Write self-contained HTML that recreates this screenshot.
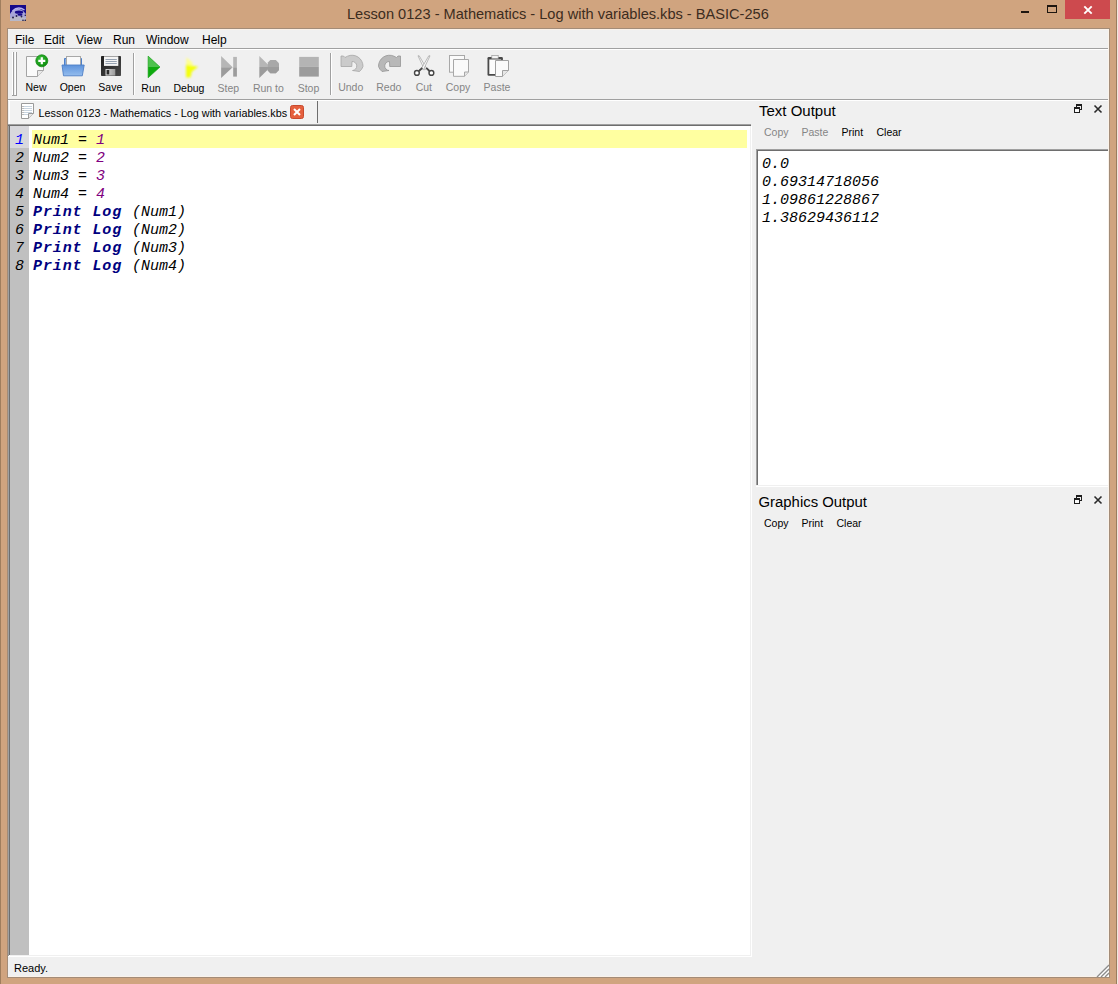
<!DOCTYPE html>
<html><head><meta charset="utf-8">
<style>
*{margin:0;padding:0;box-sizing:border-box}
html,body{width:1118px;height:984px;overflow:hidden;background:#D0A47F;font-family:"Liberation Sans",sans-serif;color:#000}
.a{position:absolute;white-space:pre}
.c{position:absolute;white-space:pre;text-align:center;width:60px}
.title{left:347px;top:6px;font-size:14.6px;line-height:16px;color:#3C2C20}
.menu{top:33px;font-size:12px;line-height:14px;color:#000}
.tl{font-size:10.5px;line-height:12px;top:81px;color:#000}
.dis{color:#858585}
.code{font-family:"Liberation Mono",monospace;font-size:15px;font-style:italic;line-height:18px}
.kw{font-weight:bold;color:#000080;letter-spacing:0.9px}
.num{color:#800080}
.ln{font-family:"Liberation Mono",monospace;font-size:15px;font-style:italic;line-height:18px;text-align:right;width:15px;left:9px}
.db{font-size:10.5px;line-height:12px}
</style></head><body>
<!-- window frame -->
<div class="a" style="left:0;top:0;width:1px;height:984px;background:#A07E5E"></div>
<div class="a" style="left:1116px;top:0;width:1px;height:984px;background:#9C7C5E"></div>
<div class="a" style="left:1117px;top:0;width:1px;height:984px;background:#F2E8DE"></div>
<!-- app icon -->
<svg class="a" style="left:10px;top:5px" width="16" height="16" viewBox="0 0 16 16">
<rect x="0" y="0" width="16" height="16" fill="#16098A"/>
<path d="M0 16V9Q2 5 6 4Q11 3 15 8L16 9V16Z" fill="#A7A5D8"/>
<path d="M2.5 6Q8 0.5 14.5 5" stroke="#B4B0EE" stroke-width="1.5" fill="none"/>
<ellipse cx="9" cy="7.2" rx="4.2" ry="1.6" fill="#16098A"/>
<ellipse cx="10" cy="9.8" rx="2.6" ry="1" fill="#16098A"/>
<path d="M0 16V13Q8 10 16 13V16Z" fill="#B8B8C8"/>
<g fill="#28244A"><circle cx="3" cy="12.5" r="1"/><circle cx="6.5" cy="11" r="0.9"/><circle cx="11.5" cy="11.5" r="0.9"/><circle cx="15.3" cy="10.2" r="0.8"/><circle cx="13" cy="15.3" r="0.8"/><circle cx="15.3" cy="15.3" r="0.8"/></g>
</svg>
<div class="a title">Lesson 0123 - Mathematics - Log with variables.kbs - BASIC-256</div>
<!-- min/max/close -->
<div class="a" style="left:1021px;top:11px;width:8px;height:2px;background:#1E1610"></div>
<div class="a" style="left:1047px;top:5px;width:10px;height:8px;border:1px solid #1E1610;border-top-width:2px"></div>
<div class="a" style="left:1065px;top:0;width:45px;height:19px;background:#CD4A4E"></div>
<svg class="a" style="left:1083px;top:5px" width="10" height="10" viewBox="0 0 10 10"><path d="M1.3 1.3L8.7 8.7M8.7 1.3L1.3 8.7" stroke="#fff" stroke-width="1.9"/></svg>
<!-- client -->
<div class="a" style="left:7px;top:28px;width:1103px;height:950px;background:#A38C78"></div>
<div class="a" style="left:8px;top:29px;width:1101px;height:948px;background:#F0F0F0"></div>
<div class="a" style="left:1108px;top:29px;width:1px;height:948px;background:#FBF3EA"></div>
<div class="a" style="left:8px;top:29px;width:1100px;height:1px;background:#FBF2EA"></div>
<div class="a" style="left:8px;top:976px;width:1100px;height:1px;background:#FBF2EA"></div>
<!-- menubar -->
<div class="a menu" style="left:15px">File</div>
<div class="a menu" style="left:44px">Edit</div>
<div class="a menu" style="left:76px">View</div>
<div class="a menu" style="left:113px">Run</div>
<div class="a menu" style="left:146px">Window</div>
<div class="a menu" style="left:202px">Help</div>
<div class="a" style="left:8px;top:48px;width:1100px;height:1px;background:#A0A0A0"></div>
<div class="a" style="left:8px;top:49px;width:1100px;height:1px;background:#FFFFFF"></div>
<!-- toolbar handle -->
<div class="a" style="left:12px;top:52px;width:1px;height:43px;background:#FFFFFF"></div>
<div class="a" style="left:13px;top:52px;width:1px;height:43px;background:#A0A0A0"></div>
<div class="a" style="left:15px;top:52px;width:1px;height:43px;background:#FFFFFF"></div>
<div class="a" style="left:16px;top:52px;width:1px;height:43px;background:#A0A0A0"></div>
<div class="a" style="left:12px;top:95px;width:5px;height:1px;background:#A0A0A0"></div>
<!-- toolbar separators -->
<div class="a" style="left:133px;top:53px;width:1px;height:42px;background:#A0A0A0"></div>
<div class="a" style="left:134px;top:53px;width:1px;height:42px;background:#FFFFFF"></div>
<div class="a" style="left:330px;top:53px;width:1px;height:42px;background:#A0A0A0"></div>
<div class="a" style="left:331px;top:53px;width:1px;height:42px;background:#FFFFFF"></div>
<!-- TOOLBAR ICONS -->
<svg class="a" style="left:0;top:0" width="520" height="100" viewBox="0 0 520 100">
<defs>
<linearGradient id="gOpen" x1="0" y1="0" x2="0" y2="1"><stop offset="0" stop-color="#5E93DC"/><stop offset="1" stop-color="#94BDEE"/></linearGradient>
<linearGradient id="gSave" x1="0" y1="0" x2="1" y2="1"><stop offset="0" stop-color="#1E1E1E"/><stop offset="1" stop-color="#4A4A4A"/></linearGradient>
<linearGradient id="gShut" x1="0" y1="0" x2="1" y2="0"><stop offset="0" stop-color="#D8D8D8"/><stop offset="1" stop-color="#9A9A9A"/></linearGradient>
<radialGradient id="gGreen" cx="0.4" cy="0.35" r="0.7"><stop offset="0" stop-color="#3CC03C"/><stop offset="1" stop-color="#0A8A0A"/></radialGradient>
<filter id="blur1" x="-50%" y="-50%" width="200%" height="200%"><feGaussianBlur stdDeviation="1.1"/></filter>
</defs>
<!-- New -->
<path d="M26.5 56.5H43.5V70.5L37.5 76.5H26.5Z" fill="#FAFAFA" stroke="#A4A4A4"/>
<path d="M43.5 70.5H37.5V76.5" fill="#E8E8E8" stroke="#A4A4A4"/>
<circle cx="41.8" cy="60.8" r="6" fill="url(#gGreen)" stroke="#138A13" stroke-width="0.8"/>
<path d="M41.8 57.3V64.3M38.3 60.8H45.3" stroke="#fff" stroke-width="2.2"/>
<!-- Open -->
<path d="M64.5 58.5H81.5V66H64.5Z" fill="#7FAAE4" stroke="#4F80C8"/>
<rect x="66.5" y="56.5" width="14" height="9" fill="#FAFAFA" stroke="#A8A8A8"/>
<path d="M62 65H84.2L82.3 75.8H63.5Z" fill="url(#gOpen)" stroke="#4F7FC6" stroke-width="0.9"/>
<!-- Save -->
<rect x="101" y="56" width="20" height="20" rx="0.8" fill="url(#gSave)"/>
<rect x="104" y="56.4" width="14.3" height="9.5" fill="#F4F4F4"/>
<path d="M105.5 59.5H116.8M105.5 61.5H116.8M105.5 63.5H116.8" stroke="#8C9AAA" stroke-width="0.9"/>
<rect x="105.5" y="69" width="9.8" height="6.6" fill="url(#gShut)"/>
<rect x="106.6" y="70" width="2.6" height="4.4" fill="#2A2A2A"/>
<!-- Run -->
<path d="M148.1 56.1L160 67L148.1 67Z" fill="#4DC24D"/>
<path d="M148.1 67L160 67L148.1 77.8Z" fill="#0EAA0E"/>
<path d="M148.1 56.1L160 67L148.1 77.8Z" fill="none" stroke="#11A011" stroke-width="0.6"/>
<!-- Debug -->
<g filter="url(#blur1)">
<path d="M186.3 57.2L192.5 62.5L192.5 66.5L186.3 66.5Z" fill="#FFFF90"/>
<path d="M186 64.5L198.2 66.8L192 71.5L190.5 77.5L186 77.5Z" fill="#F4FF10"/>
</g>
<!-- Step -->
<path d="M221.1 56.1L232.7 67.3H221.1Z" fill="#B6B6B6"/>
<path d="M221.1 67.3H232.7L221.1 78.1Z" fill="#9C9C9C"/>
<rect x="233.2" y="56.9" width="3.7" height="10.4" fill="#B6B6B6"/>
<rect x="233.2" y="67.3" width="3.7" height="9.3" fill="#9C9C9C"/>
<!-- Run to -->
<path d="M259.3 56.1L270.5 67H259.3Z" fill="#B6B6B6"/>
<path d="M259.3 67H270.5L259.3 78Z" fill="#9C9C9C"/>
<path d="M270.3 59.9H275.8L279 63.2V69.9L275.8 73.2H270.3L267.8 70.5V62.6Z" fill="#A8A8A8"/>
<path d="M267.8 67H279V69.9L275.8 73.2H270.3L267.8 70.5Z" fill="#9C9C9C"/>
<!-- Stop -->
<rect x="299.2" y="56.9" width="19.6" height="10" fill="#B4B4B4"/>
<rect x="299.2" y="66.9" width="19.6" height="9.7" fill="#9C9C9C"/>
<!-- Undo -->
<path d="M341 56L343.5 56L345 57.5L347.5 56.2A11 11 0 0 1 363 66.5A11 11 0 0 1 359.5 71.5L352.5 70.5A4.5 4.5 0 0 0 352 61.5L351.8 66.5L341 66.5Z" fill="#CBCBCB" stroke="#A6A6A6" stroke-width="0.8"/>
<!-- Redo -->
<g transform="translate(741.5 0) scale(-1 1)"><path d="M341 56L343.5 56L345 57.5L347.5 56.2A11 11 0 0 1 363 66.5A11 11 0 0 1 359.5 71.5L352.5 70.5A4.5 4.5 0 0 0 352 61.5L351.8 66.5L341 66.5Z" fill="#B8B8B8" stroke="#959595" stroke-width="0.8"/></g>
<!-- Cut -->
<path d="M418 55.8L419.2 55.8L426.6 68.6L424.6 69.8Z" fill="#FCFCFC" stroke="#8E8E8E" stroke-width="0.6"/>
<path d="M430 55.8L428.8 55.8L421.4 68.6L423.4 69.8Z" fill="#FCFCFC" stroke="#8E8E8E" stroke-width="0.6"/>
<path d="M419 71L422.3 67.8M429.5 71L426.2 67.8" stroke="#454545" stroke-width="1.8"/>
<circle cx="416.9" cy="72.9" r="2.4" fill="#FFFFFF" stroke="#454545" stroke-width="1.4"/>
<circle cx="431.4" cy="72.9" r="2.4" fill="#FFFFFF" stroke="#454545" stroke-width="1.4"/>
<!-- Copy -->
<rect x="449.5" y="55.5" width="15" height="16.7" fill="#FAFAFA" stroke="#A8A8A8"/>
<path d="M453.5 59.5H468.5V72L464.5 76.3H453.5Z" fill="#FAFAFA" stroke="#A8A8A8"/>
<path d="M468.5 72H464.5V76.3" fill="#E6E6E6" stroke="#A8A8A8"/>
<!-- Paste -->
<rect x="487.5" y="57" width="15.4" height="18.8" rx="1.2" fill="#4A4A4A"/>
<rect x="489.3" y="59.5" width="11.8" height="14.5" fill="#FCFCFC"/>
<rect x="491.8" y="55.5" width="6.4" height="3" fill="#F4F4F4" stroke="#9A9A9A" stroke-width="0.7"/>
<path d="M495.5 60.5H508.5V70.5L502.5 76.5H495.5Z" fill="#FAFAFA" stroke="#A0A0A0"/>
<path d="M508.5 70.5H502.5V76.5" fill="#E6E6E6" stroke="#A0A0A0"/>

</svg>
<!-- toolbar labels -->
<div class="c tl" style="left:6px">New</div>
<div class="c tl" style="left:42.5px">Open</div>
<div class="c tl" style="left:80.3px">Save</div>
<div class="c tl" style="left:121px;top:82px">Run</div>
<div class="c tl" style="left:159px;top:82px">Debug</div>
<div class="c tl dis" style="left:198.4px;top:82px">Step</div>
<div class="c tl dis" style="left:238.4px;top:82px">Run to</div>
<div class="c tl dis" style="left:278.5px;top:82px">Stop</div>
<div class="c tl dis" style="left:320.7px">Undo</div>
<div class="c tl dis" style="left:358.8px">Redo</div>
<div class="c tl dis" style="left:393.8px">Cut</div>
<div class="c tl dis" style="left:428px">Copy</div>
<div class="c tl dis" style="left:467px">Paste</div>
<div class="a" style="left:8px;top:99px;width:1100px;height:1px;background:#A0A0A0"></div>
<div class="a" style="left:8px;top:100px;width:1100px;height:1px;background:#FFFFFF"></div>
<!-- tab bar -->
<div class="a" style="left:9px;top:101px;width:308px;height:24px;background:#F2F2F2;border-left:1px solid #FFFFFF"></div>
<div class="a" style="left:317px;top:101px;width:1px;height:22px;background:#6E6E6E"></div>
<svg class="a" style="left:21px;top:103px" width="14" height="16" viewBox="0 0 14 16">
<path d="M0.5 0.5 H12.5 V10.5 L7.5 15.5 H0.5Z" fill="#fff" stroke="#9A9A9A"/>
<path d="M12.5 10.5 H7.5 V15.5" fill="#E8E8E8" stroke="#9A9A9A"/>
<g stroke="#C8D4E0"><path d="M3 3.5H11M3 5.5H11M3 7.5H11M3 9.5H11M3 11.5H7"/></g>
<g fill="#777"><rect x="1.5" y="3" width="1" height="1"/><rect x="1.5" y="5" width="1" height="1"/><rect x="1.5" y="7" width="1" height="1"/><rect x="1.5" y="9" width="1" height="1"/><rect x="1.5" y="11" width="1" height="1"/></g>
</svg>
<div class="a" style="left:38.6px;top:107px;font-size:10.8px;line-height:12px">Lesson 0123 - Mathematics - Log with variables.kbs</div>
<svg class="a" style="left:290px;top:105px" width="14" height="14" viewBox="0 0 14 14">
<rect x="0.5" y="0.5" width="13" height="13" rx="2" fill="#E5603E" stroke="#C84A2E"/>
<path d="M4 4L10 10M10 4L4 10" stroke="#fff" stroke-width="2"/>
</svg>
<div class="a" style="left:8px;top:124px;width:743px;height:1px;background:#A0A0A0"></div>
<div class="a" style="left:8px;top:125px;width:743px;height:1px;background:#6E6E6E"></div>
<!-- editor -->
<div class="a" style="left:8px;top:126px;width:744px;height:831px;background:#fff"></div>
<div class="a" style="left:8px;top:126px;width:1px;height:830px;background:#A0A0A0"></div>
<div class="a" style="left:9px;top:126px;width:1px;height:829px;background:#6E6E6E"></div>
<div class="a" style="left:10px;top:126px;width:19px;height:829px;background:#C0C0C0"></div>
<div class="a" style="left:10px;top:126px;width:19px;height:22px;background:#D8D8DC"></div>
<div class="a" style="left:10px;top:955px;width:741px;height:1px;background:#F0F0F0"></div>
<div class="a" style="left:750px;top:126px;width:1px;height:830px;background:#F0F0F0"></div>
<div class="a" style="left:32px;top:130px;width:715px;height:18px;background:#FFFFA0"></div>
<!-- line numbers -->
<div class="a ln" style="top:132px;color:#0000FF">1</div>
<div class="a ln" style="top:150px">2</div>
<div class="a ln" style="top:168px">3</div>
<div class="a ln" style="top:186px">4</div>
<div class="a ln" style="top:204px">5</div>
<div class="a ln" style="top:222px">6</div>
<div class="a ln" style="top:240px">7</div>
<div class="a ln" style="top:258px">8</div>
<!-- code -->
<div class="a code" style="left:33px;top:132px">Num1 = <span class="num">1</span></div>
<div class="a code" style="left:33px;top:150px">Num2 = <span class="num">2</span></div>
<div class="a code" style="left:33px;top:168px">Num3 = <span class="num">3</span></div>
<div class="a code" style="left:33px;top:186px">Num4 = <span class="num">4</span></div>
<div class="a code" style="left:33px;top:204px"><span class="kw">Print Log </span>(Num1)</div>
<div class="a code" style="left:33px;top:222px"><span class="kw">Print Log </span>(Num2)</div>
<div class="a code" style="left:33px;top:240px"><span class="kw">Print Log </span>(Num3)</div>
<div class="a code" style="left:33px;top:258px"><span class="kw">Print Log </span>(Num4)</div>
<!-- dock: text output -->
<div class="a" style="left:759px;top:102px;font-size:15px;line-height:17px">Text Output</div>
<svg class="a" style="left:1074px;top:104px" width="30" height="10" viewBox="0 0 30 10" shape-rendering="crispEdges">
<g fill="#1E1E1E"><rect x="2" y="0" width="6" height="2"/><rect x="7" y="0" width="1" height="6"/><rect x="2" y="0" width="1" height="3"/><rect x="6" y="5" width="2" height="1"/>
<rect x="1" y="5" width="4" height="3" fill="#FAFAFA"/>
<rect x="0" y="3" width="6" height="2"/><rect x="0" y="3" width="1" height="6"/><rect x="5" y="3" width="1" height="6"/><rect x="0" y="8" width="6" height="1"/></g>
<path d="M20.5 1.5L27.5 8.5M27.5 1.5L20.5 8.5" stroke="#2A2A2A" stroke-width="1.6" shape-rendering="auto"/>
</svg>
<div class="a db dis" style="left:764px;top:126px">Copy</div>
<div class="a db dis" style="left:801.5px;top:126px">Paste</div>
<div class="a db" style="left:841.5px;top:126px">Print</div>
<div class="a db" style="left:876.5px;top:126px">Clear</div>
<div class="a" style="left:756px;top:149px;width:352px;height:338px;background:#A0A0A0"></div>
<div class="a" style="left:757px;top:150px;width:351px;height:337px;background:#6E6E6E"></div>
<div class="a" style="left:758px;top:151px;width:350px;height:334px;background:#fff"></div>
<div class="a" style="left:756px;top:485px;width:352px;height:1px;background:#F0F0F0"></div>
<div class="a" style="left:756px;top:486px;width:352px;height:1px;background:#FFFFFF"></div>
<div class="a code" style="left:762px;top:156px">0.0
0.69314718056
1.09861228867
1.38629436112</div>
<!-- dock: graphics output -->
<div class="a" style="left:758.5px;top:494px;font-size:14.9px;line-height:17px">Graphics Output</div>
<svg class="a" style="left:1074px;top:495px" width="30" height="10" viewBox="0 0 30 10" shape-rendering="crispEdges">
<g fill="#1E1E1E"><rect x="2" y="0" width="6" height="2"/><rect x="7" y="0" width="1" height="6"/><rect x="2" y="0" width="1" height="3"/><rect x="6" y="5" width="2" height="1"/>
<rect x="1" y="5" width="4" height="3" fill="#FAFAFA"/>
<rect x="0" y="3" width="6" height="2"/><rect x="0" y="3" width="1" height="6"/><rect x="5" y="3" width="1" height="6"/><rect x="0" y="8" width="6" height="1"/></g>
<path d="M20.5 1.5L27.5 8.5M27.5 1.5L20.5 8.5" stroke="#2A2A2A" stroke-width="1.6" shape-rendering="auto"/>
</svg>
<div class="a db" style="left:764px;top:517px">Copy</div>
<div class="a db" style="left:801.5px;top:517px">Print</div>
<div class="a db" style="left:836.5px;top:517px">Clear</div>
<!-- status -->
<div class="a" style="left:14px;top:962px;font-size:11px;line-height:12px">Ready.</div>
<svg class="a" style="left:1096px;top:964px" width="13" height="13" viewBox="0 0 13 13">
<g stroke="#FFFFFF" stroke-width="1.4"><path d="M13.5 2.5L3 13M13.5 6.5L7 13M13.5 10.5L11 13"/></g>
<g stroke="#8C8C8C" stroke-width="1.3"><path d="M13 1L1 13M13 5L5 13M13 9L9 13"/></g>
</svg>
</body></html>
